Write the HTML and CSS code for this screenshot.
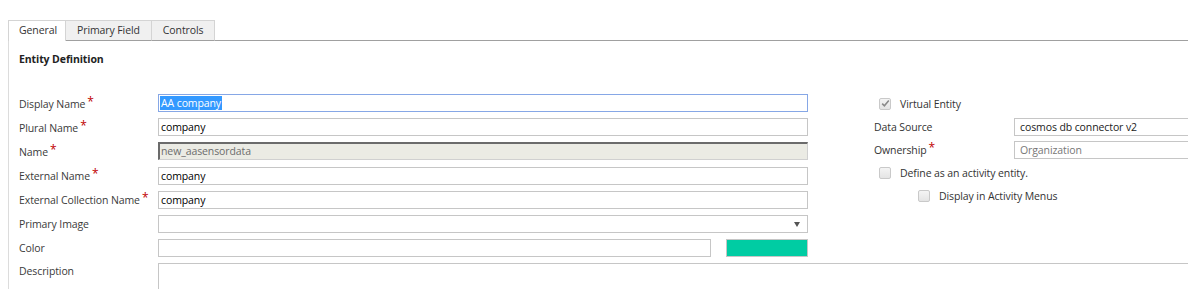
FILE: index.html
```html
<!DOCTYPE html>
<html>
<head>
<meta charset="utf-8">
<link rel="stylesheet" href="styles.css">
</head>
<body>
<div class="page">
  <div class="tabs">
    <div class="tab active">General</div>
    <div class="tab">Primary Field</div>
    <div class="tab">Controls</div>
    <div class="tab-fill"></div>
  </div>
  <div class="panel">
    <div class="section-title">Entity Definition</div>
    <div class="form">
      <div class="left">
        <div class="row">
          <div class="label">Display Name<span class="req">*</span></div>
          <div class="field focus"><span class="sel">AA company</span></div>
        </div>
        <div class="row">
          <div class="label">Plural Name<span class="req">*</span></div>
          <div class="field">company</div>
        </div>
        <div class="row">
          <div class="label">Name<span class="req">*</span></div>
          <div class="field disabled">new_aasensordata</div>
        </div>
        <div class="row">
          <div class="label">External Name<span class="req">*</span></div>
          <div class="field">company</div>
        </div>
        <div class="row">
          <div class="label">External Collection Name<span class="req">*</span></div>
          <div class="field">company</div>
        </div>
        <div class="row">
          <div class="label">Primary Image</div>
          <div class="field select"><span class="arrow"></span></div>
        </div>
        <div class="row">
          <div class="label">Color</div>
          <div class="color-wrap">
            <div class="field color-input"></div>
            <div class="swatch"></div>
          </div>
        </div>
      </div>
      <div class="right">
        <div class="rrow check-row">
          <span class="cb checked"><svg width="9" height="9" viewBox="0 0 9 9"><path d="M1.2 4.6 L3.4 6.8 L7.8 1.6" fill="none" stroke="#8a8a8a" stroke-width="1.6"/></svg></span>
          <span class="cb-label">Virtual Entity</span>
        </div>
        <div class="rrow">
          <div class="rlabel">Data Source</div>
          <div class="rfield">cosmos db connector v2</div>
        </div>
        <div class="rrow">
          <div class="rlabel">Ownership<span class="req">*</span></div>
          <div class="rfield muted">Organization</div>
        </div>
        <div class="rrow check-row">
          <span class="cb"></span>
          <span class="cb-label">Define as an activity entity.</span>
        </div>
        <div class="rrow check-row indent">
          <span class="cb"></span>
          <span class="cb-label">Display in Activity Menus</span>
        </div>
      </div>
    </div>
    <div class="desc-row">
      <div class="label">Description</div>
      <div class="textarea"></div>
    </div>
  </div>
</div>
</body>
</html>
```
FILE: styles.css
```css
html, body {
  margin: 0;
  padding: 0;
  background: #ffffff;
  overflow: hidden;
  width: 1188px;
  height: 289px;
}
body {
  font-family: "Open Sans", "Noto Sans", sans-serif;
  font-size: 10.5px;
  letter-spacing: -0.1px;
  color: #333333;
}
.page {
  padding: 20px 0 0 8px;
  height: 269px;
  overflow: hidden;
}
.tabs {
  display: flex;
  height: 21px;
}
.tab {
  box-sizing: border-box;
  height: 21px;
  padding: 0 11px 0 11px;
  line-height: 19px;
  color: #333;
  background: #f0f0f0;
  border: 1px solid #d4d4d4;
  border-bottom: 1px solid #a0a0a0;
  border-left: none;
  white-space: nowrap;
}
.tab.active {
  background: #fff;
  border-left: 1px solid #d4d4d4;
  border-bottom: none;
  width: 58px;
  padding: 0 0 0 10px;
}
.tab-fill {
  flex: 1;
  border-bottom: 1px solid #a0a0a0;
}
.panel {
  border-left: 1px solid #dcdcdc;
  padding: 11px 0 40px 10px;
}
.section-title {
  font-weight: bold;
  color: #222;
  line-height: 15px;
  height: 15px;
}
.form {
  display: flex;
  margin-top: 24px;
}
.left {
  width: 789px;
  flex: none;
}
.row {
  display: grid;
  grid-template-columns: 139px 650px;
  align-items: center;
  height: 24.2px;
}
.label {
  white-space: nowrap;
  color: #3a3a3a;
}
.req {
  color: #c00000;
  margin-left: 2px;
  font-size: 12px;
  position: relative;
  top: -2px;
}
.field {
  box-sizing: border-box;
  height: 18px;
  border: 1px solid #c6c6c6;
  padding: 0 2px;
  line-height: 16px;
  color: #000;
  white-space: nowrap;
  overflow: hidden;
}
.field.focus {
  border-color: #86a7e6;
  padding-left: 1px;
}
.sel {
  background: #3399ff;
  color: #fff;
  display: inline-block;
  line-height: 14px;
  padding: 0 1px;
}
.field.disabled {
  background: #ebebe4;
  color: #6d6d6d;
  border-top: 2px solid #6b6b6b;
  border-left: 2px solid #6b6b6b;
  border-right: 1px solid #d0d0d0;
  border-bottom: 1px solid #d0d0d0;
  line-height: 15px;
  padding-left: 1px;
}
.field.select {
  position: relative;
}
.arrow {
  position: absolute;
  right: 7px;
  top: 6px;
  width: 0;
  height: 0;
  border-left: 3.5px solid transparent;
  border-right: 3.5px solid transparent;
  border-top: 5px solid #555;
}
.color-wrap {
  display: flex;
  justify-content: space-between;
}
.color-input {
  width: 553px;
}
.swatch {
  box-sizing: border-box;
  width: 82px;
  height: 18px;
  background: #00cca3;
  border: 1px solid #c6c6c6;
}
.right {
  margin-left: 66px;
  margin-top: 1px;
  flex: none;
  width: 400px;
}
.rrow {
  display: flex;
  align-items: center;
  height: 23.2px;
}
.rlabel {
  width: 140px;
  flex: none;
  white-space: nowrap;
  color: #333;
}
.rfield {
  box-sizing: border-box;
  width: 260px;
  height: 18px;
  border: 1px solid #c6c6c6;
  padding: 0 5px;
  line-height: 16px;
  color: #222;
  white-space: nowrap;
}
.rfield.muted {
  color: #777;
}
.check-row {
  padding-left: 5px;
}
.check-row.indent {
  padding-left: 44px;
}
.cb {
  box-sizing: border-box;
  width: 12px;
  height: 12px;
  border: 1px solid #c9c9c9;
  border-radius: 2px;
  background: linear-gradient(#f4f4f4, #e4e4e4);
  display: inline-flex;
  align-items: center;
  justify-content: center;
  flex: none;
}
.cb-label {
  margin-left: 9px;
  color: #333;
  white-space: nowrap;
}
.desc-row {
  display: grid;
  grid-template-columns: 139px 1fr;
  margin-top: 3px;
}
.desc-row .label {
  padding-top: 1px;
}
.textarea {
  box-sizing: border-box;
  height: 40px;
  border: 1px solid #c6c6c6;
  border-right: none;
}
```
